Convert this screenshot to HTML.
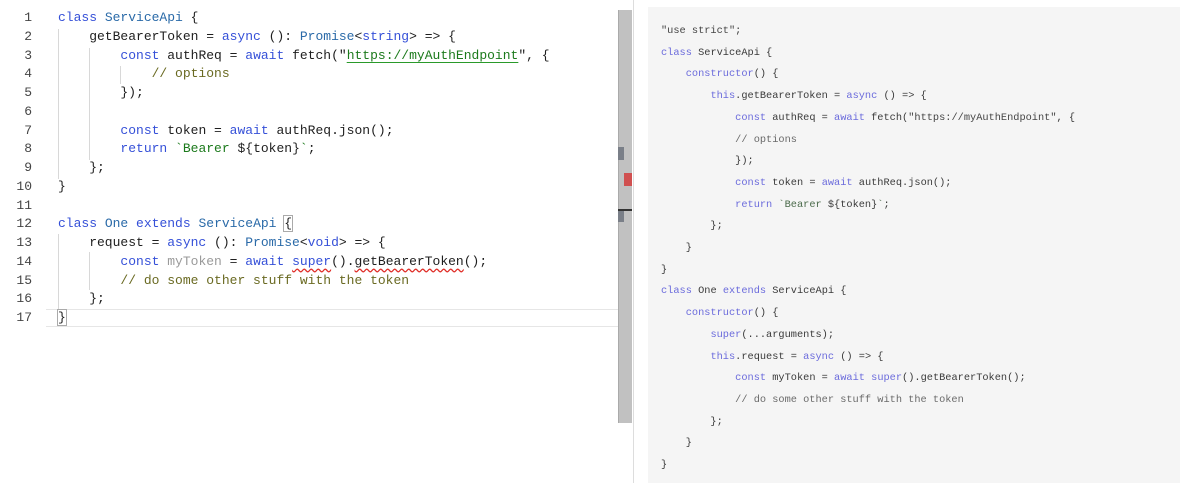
<!DOCTYPE html>
<html><head><meta charset="utf-8">
<style>
html,body{margin:0;padding:0;background:#fff;width:1180px;height:483px;overflow:hidden;position:relative}
#left .ln{position:absolute;left:0;width:32px;text-align:right;color:#444;font-size:13px;font-family:"Liberation Mono",monospace}
#left .c{position:absolute;left:58px;font-size:13px;color:#1e1e1e;font-family:"Liberation Mono",monospace;white-space:pre}
.k{color:#3550d8}.t{color:#2a6aa8}.s{color:#1c7a1c}.cm{color:#6a6a22}.g{color:#9a9a9a}
.sq{text-decoration:underline wavy #e0302a;text-decoration-skip-ink:none;text-underline-offset:3px}
#right{position:absolute;left:648px;top:7px;width:532px;height:476px;background:#f5f5f5}
#right .c{position:absolute;left:13px;font-size:10.3px;color:#3a3a3a;font-family:"Liberation Mono",monospace;white-space:pre}
#right .k{color:#6b6bdc}#right .s{color:#4a6a4a}#right .s2{color:#444}#right .cm{color:#6a6a6a}
.guide{position:absolute;width:1px;background:#d8d8d8}
</style></head><body>
<div id="left">
<div style="position:absolute;left:46px;top:309px;width:572px;height:16px;border-top:1px solid #e6e6e6;border-bottom:1px solid #e6e6e6"></div>
<div class="guide" style="left:58px;top:29px;height:150px"></div>
<div class="guide" style="left:89px;top:48px;height:112px"></div>
<div class="guide" style="left:120px;top:66px;height:18px"></div>
<div class="guide" style="left:58px;top:234px;height:75px"></div>
<div class="guide" style="left:89px;top:252px;height:38px"></div>
<div id="lines"></div>
</div>
<div style="position:absolute;left:618px;top:10px;width:13px;height:413px;background:#c1c1c1;border-left:1px solid #aaa"></div>
<div style="position:absolute;left:618px;top:147px;width:6px;height:13px;background:#7a7f88"></div>
<div style="position:absolute;left:624px;top:173px;width:8px;height:13px;background:#d05050"></div>
<div style="position:absolute;left:618px;top:209px;width:14px;height:2px;background:#333"></div>
<div style="position:absolute;left:618px;top:211px;width:6px;height:11px;background:#7a7f88"></div>
<div style="position:absolute;left:633px;top:0;width:1px;height:483px;background:#ddd"></div>
<div id="right"></div>
<script>
var L=[
'<span class="k">class</span> <span class="t">ServiceApi</span> {',
'    getBearerToken = <span class="k">async</span> (): <span class="t">Promise</span>&lt;<span class="k">string</span>&gt; =&gt; {',
'        <span class="k">const</span> authReq = <span class="k">await</span> fetch("<span class="s" style="text-decoration:underline #2a9a2a;text-underline-offset:3px">https://myAuthEndpoint</span>", {',
'            <span class="cm">// options</span>',
'        });',
'',
'        <span class="k">const</span> token = <span class="k">await</span> authReq.json();',
'        <span class="k">return</span> <span class="s">`Bearer </span>${token}<span class="s">`</span>;',
'    };',
'}',
'',
'<span class="k">class</span> <span class="t">One</span> <span class="k">extends</span> <span class="t">ServiceApi</span> <span style="outline:1px solid #aaa">{</span>',
'    request = <span class="k">async</span> (): <span class="t">Promise</span>&lt;<span class="k">void</span>&gt; =&gt; {',
'        <span class="k">const</span> <span class="g">myToken</span> = <span class="k">await</span> <span class="k sq">super</span>().<span class="sq">getBearerToken</span>();',
'        <span class="cm">// do some other stuff with the token</span>',
'    };',
'<span style="outline:1px solid #aaa">}</span>'];
var h='';
for(var i=0;i<L.length;i++){var y=10+i*18.75;
h+='<div class="ln" style="top:'+y+'px">'+(i+1)+'</div><div class="c" style="top:'+y+'px">'+L[i]+'</div>';}
document.getElementById('lines').innerHTML=h;
var R=[
'<span class="s2">"use strict"</span>;',
'<span class="k">class</span> ServiceApi {',
'    <span class="k">constructor</span>() {',
'        <span class="k">this</span>.getBearerToken = <span class="k">async</span> () =&gt; {',
'            <span class="k">const</span> authReq = <span class="k">await</span> fetch(<span class="s2">"https://myAuthEndpoint"</span>, {',
'            <span class="cm">// options</span>',
'            });',
'            <span class="k">const</span> token = <span class="k">await</span> authReq.json();',
'            <span class="k">return</span> <span class="s">`Bearer </span>${token}<span class="s">`</span>;',
'        };',
'    }',
'}',
'<span class="k">class</span> One <span class="k">extends</span> ServiceApi {',
'    <span class="k">constructor</span>() {',
'        <span class="k">super</span>(...arguments);',
'        <span class="k">this</span>.request = <span class="k">async</span> () =&gt; {',
'            <span class="k">const</span> myToken = <span class="k">await</span> <span class="k">super</span>().getBearerToken();',
'            <span class="cm">// do some other stuff with the token</span>',
'        };',
'    }',
'}'];
h='';
for(var i=0;i<R.length;i++){var y=18+i*21.7;h+='<div class="c" style="top:'+y+'px">'+R[i]+'</div>';}
document.getElementById('right').innerHTML=h;
</script>
</body></html>
